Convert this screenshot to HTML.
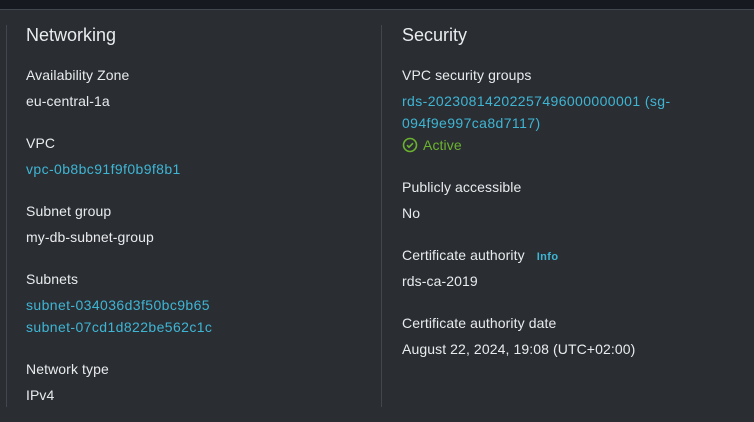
<!DOCTYPE html>
<html><head><style>
body{margin:0;width:754px;height:422px;background:#2a2e33;font-family:"Liberation Sans",sans-serif;overflow:hidden;position:relative;color:#e9ebed}
.top{position:absolute;left:0;top:0;width:754px;height:9px;background:#16191f;border-bottom:1px solid #414750}
.vl{position:absolute;width:1px;background:#414750}
.t{position:absolute;white-space:nowrap;font-size:14px;line-height:18px;letter-spacing:0.1px}
.h{font-size:18px;letter-spacing:0}
.a{color:#3fb5d4;letter-spacing:0.4px}
.g{color:#6bb32e}
</style></head><body>
<div class="top"></div>
<div class="vl" style="left:6px;top:25px;height:382px"></div>
<div class="vl" style="left:381px;top:25px;height:382px"></div>

<div class="t h" style="left:26px;top:26px">Networking</div>
<div class="t" style="left:26px;top:66px">Availability Zone</div>
<div class="t" style="left:26px;top:92px">eu-central-1a</div>
<div class="t" style="left:26px;top:134px">VPC</div>
<div class="t a" style="left:26px;top:160px">vpc-0b8bc91f9f0b9f8b1</div>
<div class="t" style="left:26px;top:202px">Subnet group</div>
<div class="t" style="left:26px;top:228px">my-db-subnet-group</div>
<div class="t" style="left:26px;top:270px">Subnets</div>
<div class="t a" style="left:26px;top:296px">subnet-034036d3f50bc9b65</div>
<div class="t a" style="left:26px;top:318px">subnet-07cd1d822be562c1c</div>
<div class="t" style="left:26px;top:360px">Network type</div>
<div class="t" style="left:26px;top:386px">IPv4</div>

<div class="t h" style="left:402px;top:26px">Security</div>
<div class="t" style="left:402px;top:66px">VPC security groups</div>
<div class="t a" style="left:402px;top:92px">rds-20230814202257496000000001 (sg-</div>
<div class="t a" style="left:402px;top:114px">094f9e997ca8d7117)</div>
<div class="t g" style="left:402px;top:136px"><svg width="16" height="16" viewBox="0 0 16 16" style="vertical-align:-3px;margin-right:5px"><circle cx="8" cy="8" r="6.5" fill="none" stroke="#6bb32e" stroke-width="1.6"/><path d="M5 8.2l2 2 4-4" fill="none" stroke="#6bb32e" stroke-width="1.6"/></svg>Active</div>
<div class="t" style="left:402px;top:178px">Publicly accessible</div>
<div class="t" style="left:402px;top:204px">No</div>
<div class="t" style="left:402px;top:246px">Certificate authority <b class="a" style="font-size:11px;margin-left:8px">Info</b></div>
<div class="t" style="left:402px;top:272px">rds-ca-2019</div>
<div class="t" style="left:402px;top:314px">Certificate authority date</div>
<div class="t" style="left:402px;top:340px">August 22, 2024, 19:08 (UTC+02:00)</div>
</body></html>
